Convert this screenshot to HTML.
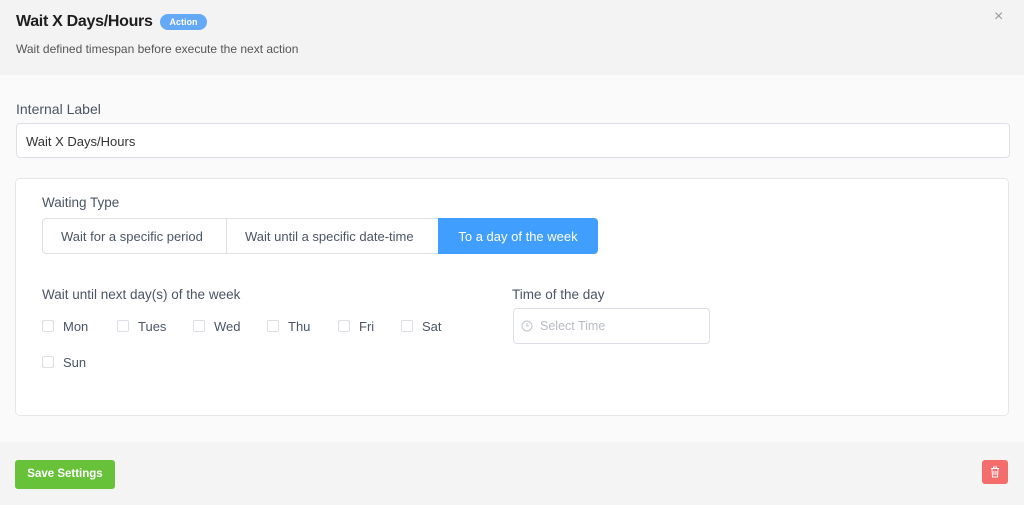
<!DOCTYPE html>
<html><head><meta charset="utf-8"><style>
*{box-sizing:border-box;margin:0;padding:0}
body{width:1024px;height:505px;overflow:hidden;font-family:"Liberation Sans",sans-serif;background:#fafafa;position:relative;color:#1f2d3d}
.abs{position:absolute}
.hdr{left:0;top:0;width:1024px;height:75px;background:#f3f3f3}
.ftr{left:0;top:442px;width:1024px;height:63px;background:#f4f4f4}
.lbl{font-size:14px;color:#4b5563}
.cb{width:12px;height:12px;border:1px solid #dcdfe6;border-radius:2px;background:#fff}
.day{font-size:13px;color:#4b5563}
</style></head><body>
<div class="abs hdr"></div>
<div class="abs" style="left:16px;top:13px;font-size:16px;font-weight:bold;color:#1e1e1e;letter-spacing:-0.3px">Wait X Days/Hours</div>
<div class="abs" style="left:160px;top:14px;width:47px;height:16px;border-radius:8px;background:#64a8f8;color:#fff;font-size:9px;font-weight:bold;text-align:center;line-height:16px">Action</div>
<div class="abs" style="left:16px;top:42px;font-size:12px;color:#555">Wait defined timespan before execute the next action</div>
<div class="abs" style="left:994px;top:8px;font-size:16px;color:#999">×</div>

<div class="abs lbl" style="left:16px;top:101px">Internal Label</div>
<div class="abs" style="left:16px;top:123px;width:994px;height:35px;background:#fff;border:1px solid #dcdfe6;border-radius:4px;font-size:13px;color:#333;padding:10px 0 0 9px">Wait X Days/Hours</div>

<div class="abs" style="left:15px;top:178px;width:994px;height:238px;background:#fff;border:1px solid #e4e6ea;border-radius:5px"></div>
<div class="abs lbl" style="left:42px;top:195px;font-size:13.5px">Waiting Type</div>
<div class="abs" style="left:42px;top:218px;width:556px;height:36px;border:1px solid #dcdfe6;border-radius:4px"></div>
<div class="abs" style="left:226px;top:218px;width:1px;height:36px;background:#dcdfe6"></div>
<div class="abs day" style="left:61px;top:229px">Wait for a specific period</div>
<div class="abs day" style="left:245px;top:229px">Wait until a specific date-time</div>
<div class="abs" style="left:438px;top:218px;width:160px;height:36px;background:#409eff;border-radius:0 4px 4px 0;color:#fff;font-size:13px;padding-top:11px;text-align:center">To a day of the week</div>

<div class="abs lbl" style="left:42px;top:287px;font-size:13.5px">Wait until next day(s) of the week</div>
<div class="abs lbl" style="left:512px;top:287px;font-size:13.5px">Time of the day</div>

<div class="abs cb" style="left:42px;top:320px"></div><div class="abs day" style="left:63px;top:319px">Mon</div>
<div class="abs cb" style="left:117px;top:320px"></div><div class="abs day" style="left:138px;top:319px">Tues</div>
<div class="abs cb" style="left:193px;top:320px"></div><div class="abs day" style="left:214px;top:319px">Wed</div>
<div class="abs cb" style="left:267px;top:320px"></div><div class="abs day" style="left:288px;top:319px">Thu</div>
<div class="abs cb" style="left:338px;top:320px"></div><div class="abs day" style="left:359px;top:319px">Fri</div>
<div class="abs cb" style="left:401px;top:320px"></div><div class="abs day" style="left:422px;top:319px">Sat</div>
<div class="abs cb" style="left:42px;top:356px"></div><div class="abs day" style="left:63px;top:355px">Sun</div>

<div class="abs" style="left:513px;top:308px;width:197px;height:36px;border:1px solid #dcdfe6;border-radius:4px;background:#fff"></div>
<svg class="abs" style="left:521px;top:320px" width="12" height="12" viewBox="0 0 12 12"><circle cx="6" cy="6" r="5" fill="none" stroke="#c0c4cc" stroke-width="1"/><path d="M6 3v3h2" fill="none" stroke="#c0c4cc"/></svg>
<div class="abs" style="left:540px;top:319px;font-size:12.5px;color:#b8bcc4">Select Time</div>

<div class="abs ftr"></div>
<div class="abs" style="left:15px;top:460px;width:100px;height:29px;background:#67c23a;border-radius:3px;color:#fff;font-size:11.5px;font-weight:bold;text-align:center;line-height:29px">Save Settings</div>
<div class="abs" style="left:982px;top:460px;width:26px;height:24px;background:#f56c6c;border-radius:3px"></div>
<svg class="abs" style="left:990px;top:466px" width="10" height="12" viewBox="0 0 10 12"><path d="M1 2.5h8M3.5 2.5V1h3v1.5M2 2.5l.5 8.5h5l.5-8.5M4 5v4M6 5v4" fill="none" stroke="#fff" stroke-width="1"/></svg>
</body></html>
